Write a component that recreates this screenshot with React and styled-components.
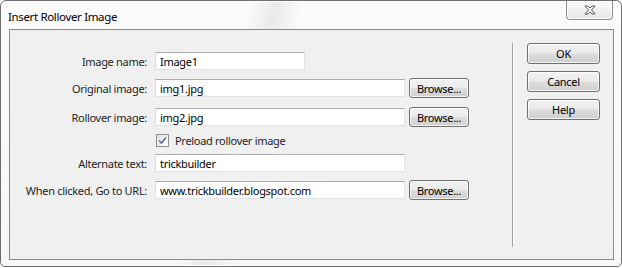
import React from 'react'
import styled, { createGlobalStyle } from 'styled-components'

const Global = createGlobalStyle`
  html, body {
    margin: 0;
    padding: 0;
    background: #ffffff;
  }
  body {
    font-family: "Noto Sans", "Liberation Sans", sans-serif;
    font-size: 11px;
    letter-spacing: -0.3px;
    color: #1e1e1e;
  }
`

const Window = styled.div`
  box-sizing: border-box;
  width: 622px;
  height: 267px;
  display: flex;
  flex-direction: column;
  border: 1px solid #6e6e6e;
  border-radius: 6px 6px 5px 5px;
  background:
    linear-gradient(105deg, rgba(255,255,255,0) 0%, rgba(255,255,255,0) 36%, rgba(220,220,220,0.55) 40%, rgba(255,255,255,0) 44%, rgba(255,255,255,0) 100%),
    linear-gradient(180deg, #fbfbfb 0%, #f7f7f7 100%);
  box-shadow: inset 0 0 0 1px #ffffff;
  overflow: hidden;
`

const TitleBar = styled.div`
  height: 28px;
  display: flex;
  align-items: flex-start;
  justify-content: space-between;
  padding-left: 7px;
`

const Title = styled.div`
  font-size: 11.5px;
  letter-spacing: -0.35px;
  line-height: 12px;
  margin-top: 10px;
  color: #000;
`

const CloseButton = styled.div`
  box-sizing: border-box;
  width: 47px;
  height: 20px;
  margin-top: -1px;
  margin-right: 8px;
  border: 1px solid #8c8c8c;
  border-top: none;
  border-radius: 0 0 4px 4px;
  background: linear-gradient(180deg, #fdfdfd 0%, #f1f1f1 50%, #e6e6e6 100%);
  box-shadow: inset 0 0 0 1px rgba(255,255,255,0.8);
  display: flex;
  align-items: center;
  justify-content: center;
`

const Client = styled.div`
  flex: 1;
  display: flex;
  margin: 0 7px 6px 8px;
  border: 1px solid #8a8a8a;
  background: #f0f0f0;
`

const Form = styled.div`
  width: 502px;
  padding-top: 21px;
  display: flex;
  flex-direction: column;
`

const Row = styled.div`
  height: 20px;
  display: flex;
  align-items: center;
  margin-top: ${p => p.$gap || 0}px;
`

const Label = styled.div`
  width: 137px;
  margin-right: 8px;
  text-align: right;
  white-space: nowrap;
`

const Input = styled.div`
  box-sizing: border-box;
  width: ${p => p.$w}px;
  height: 18px;
  padding: 0 4px;
  display: flex;
  align-items: center;
  background: #ffffff;
  border: 1px solid #e2e3ea;
  border-top-color: #abadb3;
  border-left-color: #dbdfe6;
  white-space: nowrap;
  color: #000;
`

const Button = styled.div`
  box-sizing: border-box;
  width: ${p => p.$w}px;
  height: ${p => p.$h || 20}px;
  margin-left: ${p => p.$ml || 0}px;
  margin-top: ${p => p.$mt || 0}px;
  border: 1px solid #707070;
  border-radius: 3px;
  background: linear-gradient(180deg, #f2f2f2 0%, #ebebeb 48%, #dddddd 52%, #cfcfcf 100%);
  box-shadow: inset 0 0 0 1px rgba(255,255,255,0.75);
  display: flex;
  align-items: center;
  justify-content: center;
  color: #000;
`

const CheckRow = styled.label`
  display: flex;
  align-items: center;
  margin-left: 146px;
  gap: 6px;
`

const CheckBox = styled.div`
  box-sizing: border-box;
  width: 13px;
  height: 13px;
  border: 1px solid #8e8f8f;
  background: linear-gradient(135deg, #dcdcdc 0%, #f4f4f4 60%, #ffffff 100%);
  display: flex;
  align-items: center;
  justify-content: center;
`

const Separator = styled.div`
  width: 1px;
  margin: 13px 0 12px 0;
  background: #a0a0a0;
  border-right: 1px solid #ffffff;
`

const Side = styled.div`
  padding: 13px 0 0 13px;
  display: flex;
  flex-direction: column;
`

const Close = () => (
  <svg width="14" height="10" viewBox="0 0 14 10">
    <path
      d="M2 1 L5 1 L7 3 L9 1 L12 1 L8.5 5 L12 9 L9 9 L7 7 L5 9 L2 9 L5.5 5 Z"
      fill="#f4f4f4"
      stroke="#5b5b5b"
      strokeWidth="1"
      strokeLinejoin="round"
    />
  </svg>
)

const Check = () => (
  <svg width="9" height="9" viewBox="0 0 9 9">
    <path d="M1 4.5 L3.5 7 L8 1.5" fill="none" stroke="#5a6fa5" strokeWidth="1.6" />
  </svg>
)

export default function App() {
  return (
    <>
      <Global />
      <Window>
        <TitleBar>
          <Title>Insert Rollover Image</Title>
          <CloseButton><Close /></CloseButton>
        </TitleBar>
        <Client>
          <Form>
            <Row>
              <Label>Image name:</Label>
              <Input $w={150}>Image1</Input>
            </Row>
            <Row $gap={7}>
              <Label>Original image:</Label>
              <Input $w={250}>img1.jpg</Input>
              <Button $w={60} $ml={4}>Browse...</Button>
            </Row>
            <Row $gap={9}>
              <Label>Rollover image:</Label>
              <Input $w={250}>img2.jpg</Input>
              <Button $w={60} $ml={4}>Browse...</Button>
            </Row>
            <Row $gap={3}>
              <CheckRow>
                <CheckBox><Check /></CheckBox>
                Preload rollover image
              </CheckRow>
            </Row>
            <Row $gap={3}>
              <Label>Alternate text:</Label>
              <Input $w={250}>trickbuilder</Input>
            </Row>
            <Row $gap={7}>
              <Label>When clicked, Go to URL:</Label>
              <Input $w={250}>www.trickbuilder.blogspot.com</Input>
              <Button $w={60} $ml={4}>Browse...</Button>
            </Row>
          </Form>
          <Separator />
          <Side>
            <Button $w={73} $h={21}>OK</Button>
            <Button $w={73} $h={21} $mt={7}>Cancel</Button>
            <Button $w={73} $h={21} $mt={7}>Help</Button>
          </Side>
        </Client>
      </Window>
    </>
  )
}
